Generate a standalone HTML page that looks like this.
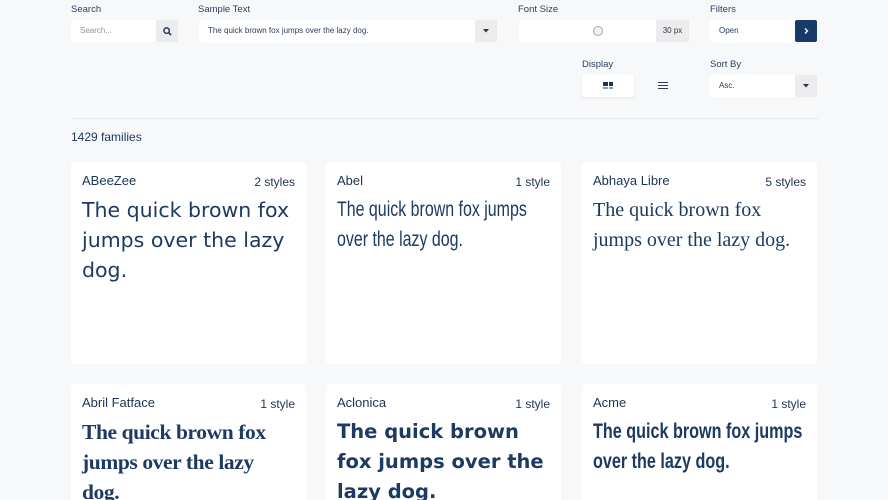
<!DOCTYPE html>
<html><head><meta charset="utf-8"><style>
*{margin:0;padding:0;box-sizing:border-box}
html,body{width:888px;height:500px;overflow:hidden}
body{background:#f7f8fa;font-family:"Liberation Sans",sans-serif;color:#1d3557;position:relative}
.lbl{position:absolute;font-size:9.5px;color:#2c3e5c}
.box{position:absolute;background:#fff;height:22px;font-size:8px;color:#2c3e5c;line-height:22px;padding-left:9px;border-radius:2px}
.btn{position:absolute;top:0;right:0;height:22px;width:22px;background:#ececec;display:flex;align-items:center;justify-content:center}
.card{position:absolute;background:#fff;width:235px;height:202px;border-radius:4px;padding:10px 11px;overflow:hidden}
.card .h{display:flex;justify-content:space-between;font-size:13px;color:#1d3557;margin-top:1px}
.card .h span:last-child{margin-top:2px;font-size:12px}
.s{font-size:22px;line-height:30px;color:#1d3a62;margin-top:6px}
</style></head><body>
<div class="lbl" style="left:71px;top:4px">Search</div>
<div class="box" style="left:71px;top:20px;width:107px;color:#8a93a0">Search...<div class="btn"><svg width="9" height="9" viewBox="0 0 10 10"><circle cx="4" cy="4" r="3" fill="none" stroke="#1d3557" stroke-width="1.6"/><path d="M6.3 6.3L9 9" stroke="#1d3557" stroke-width="1.8"/></svg></div></div>
<div class="lbl" style="left:198px;top:4px">Sample Text</div>
<div class="box" style="left:199px;top:20px;width:298px">The quick brown fox jumps over the lazy dog.<div class="btn"><svg width="6" height="4"><path d="M0 0H6L3 3.5Z" fill="#1d3557"/></svg></div></div>
<div class="lbl" style="left:518px;top:4px">Font Size</div>
<div class="box" style="left:519px;top:20px;width:170px"><div style="position:absolute;left:74px;top:6px;width:10px;height:10px;border:1px solid #aaa;border-radius:50%;background:#f1f1f1"></div><div class="btn" style="width:33px;font-size:8px">30 px</div></div>
<div class="lbl" style="left:710px;top:4px">Filters</div>
<div class="box" style="left:710px;top:20px;width:107px">Open<div class="btn" style="background:#183a68;border-radius:2px"><svg width="5" height="6"><path d="M1 0.5L3.5 3L1 5.5" fill="none" stroke="#fff" stroke-width="1.3"/></svg></div></div>
<div class="lbl" style="left:582px;top:59px">Display</div>
<div style="position:absolute;left:582px;top:74px;width:52px;height:23px;background:#fff;border-radius:3px;box-shadow:0 1px 3px rgba(0,0,0,.08)"><div style="position:absolute;left:21px;top:8px;width:10px;height:7px;background:linear-gradient(#1d3557 0 4px,transparent 4px 5px,#8a9ab0 5px)"><div style="position:absolute;left:4.5px;top:0;width:1px;height:7px;background:#fff"></div></div></div>
<div style="position:absolute;left:658px;top:82px;width:10px;height:7px;background:linear-gradient(#2c3e5c 0 1px,transparent 1px 3px,#2c3e5c 3px 4px,transparent 4px 6px,#2c3e5c 6px 7px)"></div>
<div class="lbl" style="left:710px;top:59px">Sort By</div>
<div class="box" style="left:710px;top:75px;width:107px">Asc.<div class="btn"><svg width="6" height="4"><path d="M0 0H6L3 3.5Z" fill="#1d3557"/></svg></div></div>
<div style="position:absolute;left:71px;top:118px;width:747px;height:1px;background:#e6e8ec"></div>
<div style="position:absolute;left:71px;top:130px;font-size:12px;color:#1d3557">1429 families</div>

<div class="card" style="left:71px;top:162px"><div class="h"><span>ABeeZee</span><span>2 styles</span></div><div class="s" style="font-family:'DejaVu Sans',sans-serif;font-size:20.5px">The quick brown fox jumps over the lazy dog.</div></div>
<div class="card" style="left:326px;top:162px"><div class="h"><span>Abel</span><span>1 style</span></div><div class="s" style="font-size:21px;transform:scaleX(.76);transform-origin:left;width:290px">The quick brown fox jumps over the lazy dog.</div></div>
<div class="card" style="left:582px;top:162px"><div class="h"><span>Abhaya Libre</span><span>5 styles</span></div><div class="s" style="font-family:'Liberation Serif',serif;font-size:20px">The quick brown fox jumps over the lazy dog.</div></div>
<div class="card" style="left:71px;top:384px"><div class="h"><span>Abril Fatface</span><span>1 style</span></div><div class="s" style="font-family:'Liberation Serif',serif;font-weight:bold;font-size:21.5px;letter-spacing:-.4px">The quick brown fox jumps over the lazy dog.</div></div>
<div class="card" style="left:326px;top:384px"><div class="h"><span>Aclonica</span><span>1 style</span></div><div class="s" style="font-family:'DejaVu Sans',sans-serif;font-weight:bold;font-size:19.5px">The quick brown fox jumps over the lazy dog.</div></div>
<div class="card" style="left:582px;top:384px"><div class="h"><span>Acme</span><span>1 style</span></div><div class="s" style="font-weight:bold;font-size:21px;transform:scaleX(.77);transform-origin:left;width:290px">The quick brown fox jumps over the lazy dog.</div></div>
</body></html>
